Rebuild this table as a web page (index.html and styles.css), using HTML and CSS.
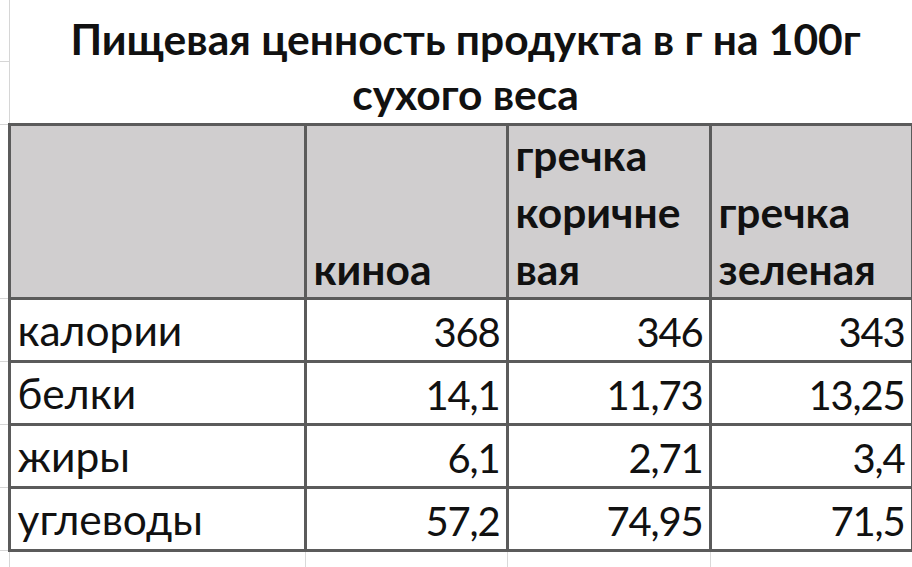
FILE: index.html
```html
<!DOCTYPE html>
<html lang="ru">
<head>
<meta charset="utf-8">
<title>Пищевая ценность</title>
<link rel="stylesheet" href="styles.css">
</head>
<body>
<table class="sheet">
  <colgroup>
    <col class="w-gutter">
    <col class="w-name">
    <col class="w-val">
    <col class="w-val2">
    <col class="w-val3">
  </colgroup>
  <tbody>
    <tr class="r-title1">
      <td class="gutter"></td>
      <td class="title" colspan="4" rowspan="2">Пищевая ценность продукта в г на 100г<br>сухого веса</td>
    </tr>
    <tr class="r-title2">
      <td class="gutter"></td>
    </tr>
    <tr class="r-head">
      <td class="gutter"></td>
      <td class="head"></td>
      <td class="head">киноа</td>
      <td class="head">гречка<br>коричне<br>вая</td>
      <td class="head">гречка<br>зеленая</td>
    </tr>
    <tr class="r-data">
      <td class="gutter"></td>
      <td class="cell name">калории</td>
      <td class="cell num">368</td>
      <td class="cell num">346</td>
      <td class="cell num">343</td>
    </tr>
    <tr class="r-data">
      <td class="gutter"></td>
      <td class="cell name">белки</td>
      <td class="cell num">14,1</td>
      <td class="cell num">11,73</td>
      <td class="cell num">13,25</td>
    </tr>
    <tr class="r-data">
      <td class="gutter"></td>
      <td class="cell name">жиры</td>
      <td class="cell num">6,1</td>
      <td class="cell num">2,71</td>
      <td class="cell num">3,4</td>
    </tr>
    <tr class="r-data">
      <td class="gutter"></td>
      <td class="cell name">углеводы</td>
      <td class="cell num">57,2</td>
      <td class="cell num">74,95</td>
      <td class="cell num">71,5</td>
    </tr>
    <tr class="r-empty">
      <td class="gutter"></td>
      <td class="blank"></td>
      <td class="blank"></td>
      <td class="blank"></td>
      <td class="blank"></td>
    </tr>
  </tbody>
</table>
</body>
</html>
```
FILE: styles.css
```css
html, body {
  margin: 0;
  padding: 0;
  background: #ffffff;
  overflow: hidden;
}

.sheet {
  border-collapse: collapse;
  table-layout: fixed;
  width: 912px;
  font-family: "Lato", "Liberation Sans", sans-serif;
  font-size: 42.5px;
  color: #111111;
}

.w-gutter { width: 9px; }
.w-name { width: 296px; }
.w-val { width: 202px; }
.w-val2 { width: 203px; }
.w-val3 { width: 202px; }

.r-title1 { height: 61px; }
.r-title2 { height: 63px; }
.r-head { height: 171px; }
.r-data { height: 63px; }
.r-empty { height: 40px; }

td {
  padding: 0;
}

.gutter {
  border-right: 1px solid #d6d6d6;
  border-bottom: 1px solid #d6d6d6;
}

.title {
  vertical-align: top;
  text-align: center;
  font-weight: 700;
  line-height: 55px;
  padding: 11px 0 0 10px;
  border-right: 1px solid #dcdcdc;
  white-space: nowrap;
}

.head {
  background: #d0cecf;
  border: 3px solid #5b5b5b;
  vertical-align: bottom;
  font-weight: 700;
  line-height: 57px;
  padding: 0 4px 0 7px;
  white-space: nowrap;
}

.cell {
  border: 3px solid #5b5b5b;
  vertical-align: bottom;
  line-height: 57px;
  padding: 0 5px 2px 7px;
  white-space: nowrap;
}

.num {
  text-align: right;
  font-size: 40px;
  line-height: 51px;
  letter-spacing: -1.2px;
  padding-right: 6px;
}

.blank {
  border-right: 1px solid #d9d9d9;
}
```
